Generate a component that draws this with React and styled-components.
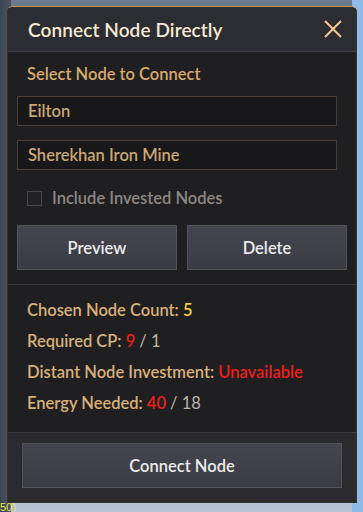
import React from "react";
import styled, { createGlobalStyle } from "styled-components";

const GlobalStyle = createGlobalStyle`
  html, body {
    margin: 0;
    padding: 0;
    width: 363px;
    height: 512px;
    overflow: hidden;
  }
  body {
    font-family: "Lato", "Noto Sans", sans-serif;
    background:
      linear-gradient(90deg, #3b4552 0%, #4a5564 3%, transparent 3%, transparent 97%, #8fbbe8 97%),
      linear-gradient(180deg, #6a7a8c 0%, #8fa4bc 60%, #b8c4d4 100%);
  }
`;

const Scene = styled.div`
  position: relative;
  width: 363px;
  height: 512px;
  padding: 6px 6px 0 7px;
  box-sizing: border-box;
`;

const Panel = styled.div`
  width: 350px;
  height: 497px;
  box-sizing: border-box;
  display: flex;
  flex-direction: column;
  background: #1f1f22;
  border: 1px solid #3a3128;
  border-top: 1px solid #c8974e;
  border-radius: 6px 6px 0 0;
  overflow: hidden;
`;

const Header = styled.div`
  height: 44px;
  flex-shrink: 0;
  display: flex;
  align-items: center;
  justify-content: space-between;
  padding: 0 12px 0 20px;
  background: #2b2d33;
  border-bottom: 1px solid #3e3f45;
`;

const Title = styled.h1`
  margin: 0;
  font-size: 19px;
  font-weight: 600;
  color: #f8ead2;
  letter-spacing: 0.1px;
`;

const CloseButton = styled.button`
  width: 22px;
  height: 22px;
  padding: 0;
  border: none;
  background: none;
  display: flex;
  align-items: center;
  justify-content: center;
  cursor: pointer;
`;

const Section = styled.div`
  display: flex;
  flex-direction: column;
  padding: ${(p) => p.$pad};
  border-bottom: ${(p) => (p.$divider ? "1px solid #38383d" : "none")};
`;

const SectionLabel = styled.div`
  font-size: 16.5px;
  font-weight: 600;
  color: #d9aa6a;
  margin: 0 0 11px 10px;
  line-height: 22px;
`;

const NodeInput = styled.div`
  width: 320px;
  height: 30px;
  box-sizing: border-box;
  display: flex;
  align-items: center;
  padding-left: 10px;
  margin-bottom: 14px;
  background: #18181a;
  border: 1px solid #4a4035;
  font-size: 16.5px;
  font-weight: 600;
  color: #c9a774;
`;

const CheckRow = styled.label`
  display: flex;
  align-items: center;
  gap: 10px;
  margin: 6px 0 0 10px;
  height: 16px;
  font-size: 16.5px;
  font-weight: 600;
  color: #8c8782;
`;

const CheckBox = styled.span`
  width: 15px;
  height: 15px;
  box-sizing: border-box;
  background: #222225;
  border: 1px solid #46464b;
`;

const ButtonRow = styled.div`
  display: flex;
  gap: 10px;
  margin-top: 19px;
`;

const ActionButton = styled.button`
  width: ${(p) => p.$width || "160px"};
  height: 45px;
  box-sizing: border-box;
  background: linear-gradient(180deg, #44454e 0%, #3a3b43 100%);
  border: 1px solid #51525a;
  color: #ebebeb;
  font-family: inherit;
  font-size: 16.5px;
  font-weight: 600;
  cursor: pointer;
`;

const StatLine = styled.div`
  font-size: 16.5px;
  font-weight: 600;
  color: #d8b078;
  height: 31px;
  line-height: 31px;
`;

const Value = styled.span`
  color: ${(p) =>
    p.$tone === "red" ? "#ec2018" : p.$tone === "yellow" ? "#f3cf3e" : "#bcb4a6"};
  font-weight: ${(p) => (p.$tone ? 600 : 400)};
`;

const Footer = styled.div`
  flex: 1;
  display: flex;
  justify-content: center;
  padding-top: 10px;
  background: #2a2a2f;
  border-top: 1px solid #3c3c42;
`;

const GameText = styled.span`
  position: absolute;
  left: 0;
  bottom: 0;
  line-height: 10px;
  font-size: 11px;
  color: #f0e040;
  font-family: "Liberation Sans", sans-serif;
`;

export default function App() {
  return (
    <>
      <GlobalStyle />
      <Scene>
        <Panel>
          <Header>
            <Title>Connect Node Directly</Title>
            <CloseButton aria-label="Close">
              <svg width="20" height="20" viewBox="0 0 20 20">
                <path d="M2 2 L18 18 M18 2 L2 18" stroke="#f2c88e" strokeWidth="2" />
              </svg>
            </CloseButton>
          </Header>
          <Section $pad="11px 9px 14px 9px" $divider>
            <SectionLabel>Select Node to Connect</SectionLabel>
            <NodeInput>Eilton</NodeInput>
            <NodeInput>Sherekhan Iron Mine</NodeInput>
            <CheckRow>
              <CheckBox />
              Include Invested Nodes
            </CheckRow>
            <ButtonRow>
              <ActionButton>Preview</ActionButton>
              <ActionButton>Delete</ActionButton>
            </ButtonRow>
          </Section>
          <Section $pad="10px 19px 13px 19px">
            <StatLine>
              Chosen Node Count: <Value $tone="yellow">5</Value>
            </StatLine>
            <StatLine>
              Required CP: <Value $tone="red">9</Value> <Value>/ 1</Value>
            </StatLine>
            <StatLine>
              Distant Node Investment: <Value $tone="red">Unavailable</Value>
            </StatLine>
            <StatLine>
              Energy Needed: <Value $tone="red">40</Value> <Value>/ 18</Value>
            </StatLine>
          </Section>
          <Footer>
            <ActionButton $width="320px">Connect Node</ActionButton>
          </Footer>
        </Panel>
        <GameText>50)</GameText>
      </Scene>
    </>
  );
}
